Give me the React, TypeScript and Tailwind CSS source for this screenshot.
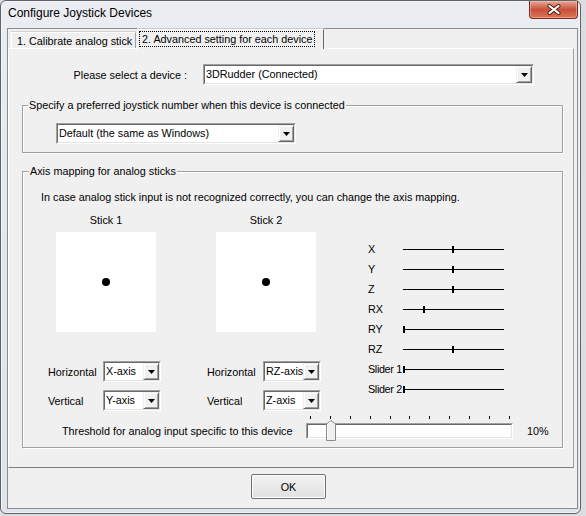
import React from "react";

function Arrow() {
  return (
    <svg width="7" height="4" viewBox="0 0 7 4" className="block">
      <path d="M0 0H7L3.5 4Z" fill="#000" />
    </svg>
  );
}

function Combo({ text, className }: { text: string; className: string }) {
  return (
    <div
      className={
        "flex h-[21px] border border-t-[#a0a0a0] border-l-[#a0a0a0] border-r-white border-b-white " +
        className
      }
    >
      <div className="flex min-w-0 flex-1 border border-t-[#696969] border-l-[#696969] border-r-[#e3e3e3] border-b-[#e3e3e3] bg-white">
        <span className="flex-1 overflow-hidden whitespace-nowrap pl-[1px] text-[10.8px] leading-[17px] text-black">
          {text}
        </span>
        <div className="flex w-[16px] items-center justify-center border border-t-[#f0f0f0] border-l-[#f0f0f0] border-r-[#696969] border-b-[#696969] bg-[#f0f0f0] shadow-[inset_1px_1px_0_#ffffff,inset_-1px_-1px_0_#a0a0a0]">
          <Arrow />
        </div>
      </div>
    </div>
  );
}

const axes: { label: string; pos: number; tight?: boolean }[] = [
  { label: "X", pos: 49 },
  { label: "Y", pos: 49 },
  { label: "Z", pos: 49 },
  { label: "RX", pos: 20 },
  { label: "RY", pos: 0 },
  { label: "RZ", pos: 49 },
  { label: "Slider 1", pos: 0, tight: true },
  { label: "Slider 2", pos: 0, tight: true },
];

function StickBox({ label }: { label: string }) {
  return (
    <div className="flex w-[100px] flex-col items-center">
      <span className="text-[10.8px] leading-[14px]">{label}</span>
      <div className="mt-[5px] flex h-[100px] w-[100px] items-center justify-center bg-white">
        <div className="h-[8px] w-[8px] rounded-full bg-black" />
      </div>
    </div>
  );
}

function Thumb() {
  return (
    <svg width="10" height="21" viewBox="0 0 10 21" className="block">
      <path d="M0.5 20.5V4L5 0.5L9.5 4V20.5Z" fill="#f0f0f0" stroke="#8a8a8a" />
      <path d="M1.5 19.5V4.5L5 1.8" fill="none" stroke="#ffffff" />
    </svg>
  );
}

export default function App() {
  const ticks = Array.from({ length: 11 });
  return (
    <div className="h-[516px] w-[586px] overflow-hidden bg-[#dcdddf] font-['Liberation_Sans',Arial,sans-serif] text-black">
      <div className="flex h-[514px] w-[581px] flex-col rounded-[6px] border border-[#5f6368] bg-linear-to-b from-[#eaedf1] via-[#e2e7ed] to-[#dfe4ea] shadow-[inset_0_0_0_1px_rgba(255,255,255,0.55)]">
        {/* title bar */}
        <div className="flex h-[27px] items-start">
          <span className="pl-[7px] pt-[5px] text-[12px] leading-[14px] text-black">
            Configure Joystick Devices
          </span>
          <div className="ml-auto mr-[2px] flex h-[18px] w-[49px] items-center justify-center rounded-b-[4px] border border-t-0 border-[#7b2a1f] bg-linear-to-b from-[#e7a898] via-[#c8503c] to-[#dd7355] shadow-[inset_0_0_0_1px_rgba(255,210,200,0.45)]">
            <svg width="14" height="11" viewBox="0 0 14 11">
              <path d="M2.5 2L11.5 9M11.5 2L2.5 9" stroke="#4a1a14" strokeWidth="4" strokeLinecap="round" />
              <path d="M2.5 2L11.5 9M11.5 2L2.5 9" stroke="#ffffff" strokeWidth="2.2" strokeLinecap="round" />
            </svg>
          </div>
        </div>

        {/* body row */}
        <div className="flex">
          <div className="w-[6px]" />
          {/* client */}
          <div className="flex h-[481px] w-[571px] flex-col border border-[#8b8c8d] bg-[#f0f0f0]">
            {/* tab strip */}
            <div className="flex h-[19px] items-end pl-[3px]">
              <div className="flex h-[16px] w-[125px] items-center border-t border-l border-r border-t-white border-l-white border-r-[#a0a0a0] pl-[5px] text-[10.8px] leading-[14px] shadow-[0_-1px_0_#d4d4d4]">
                1. Calibrate analog stick
              </div>
              <div className="relative z-10 ml-px -mb-px flex h-[20px] w-[187px] items-start border-t border-l border-r border-t-white border-l-white border-r-[#696969] bg-[#f0f0f0] pt-[1px] pl-[1px] shadow-[0_-1px_0_#c8c8c8]">
                <span className="border border-dotted border-black px-[2px] text-[10.8px] leading-[14px]">
                  2. Advanced setting for each device
                </span>
              </div>
            </div>

            {/* tab panel */}
            <div className="flex h-[420px] w-[566px] flex-col border border-t-white border-l-white border-r-[#a0a0a0] border-b-[#808080]">
              {/* device select */}
              <div className="mt-[15px] flex items-center">
                <span className="w-[178px] text-right text-[10.8px] leading-[14px]">
                  Please select a device :
                </span>
                <Combo text="3DRudder (Connected)" className="ml-[16px] w-[331px]" />
              </div>

              {/* group 1 */}
              <fieldset className="ml-[13px] mt-[13px] w-[541px] border border-[#a0a0a0] pb-[8px] pt-[11px] shadow-[inset_1px_1px_0_#ffffff,1px_1px_0_#ffffff]">
                <legend className="ml-[5px] bg-[#f0f0f0] px-px text-[10.8px] leading-[14px]">
                  Specify a preferred joystick number when this device is connected
                </legend>
                <div className="pl-[33px]">
                  <Combo text="Default (the same as Windows)" className="w-[240px]" />
                </div>
              </fieldset>

              {/* group 2 */}
              <fieldset className="ml-[13px] mt-[11px] w-[541px] border border-[#a0a0a0] pb-[8px] shadow-[inset_1px_1px_0_#ffffff,1px_1px_0_#ffffff]">
                <legend className="ml-[6px] bg-[#f0f0f0] px-px text-[10.8px] leading-[14px]">
                  Axis mapping for analog sticks
                </legend>
                <p className="ml-[18px] mt-[12px] text-[10.8px] leading-[14px]">
                  In case analog stick input is not recognized correctly, you can change the axis mapping.
                </p>

                <div className="flex items-start">
                  {/* left block */}
                  <div className="flex w-[345px] flex-col">
                    <div className="ml-[33px] mt-[9px] flex gap-[60px]">
                      <StickBox label="Stick 1" />
                      <StickBox label="Stick 2" />
                    </div>
                    <div className="ml-[25px] mt-[29px] flex items-center">
                      <span className="w-[55px] text-[10.8px] leading-[14px]">Horizontal</span>
                      <Combo text="X-axis" className="w-[58px]" />
                      <span className="ml-[46px] w-[56px] text-[10.8px] leading-[14px]">Horizontal</span>
                      <Combo text="RZ-axis" className="w-[58px]" />
                    </div>
                    <div className="ml-[25px] mt-[8px] flex items-center">
                      <span className="w-[55px] text-[10.8px] leading-[14px]">Vertical</span>
                      <Combo text="Y-axis" className="w-[58px]" />
                      <span className="ml-[46px] w-[56px] text-[10.8px] leading-[14px]">Vertical</span>
                      <Combo text="Z-axis" className="w-[58px]" />
                    </div>
                  </div>

                  {/* axis list */}
                  <div className="mt-[35px] flex flex-col">
                    {axes.map((a) => (
                      <div key={a.label} className="flex h-[20px] items-start">
                        <span
                          className={
                            a.tight
                              ? "w-[35px] whitespace-nowrap text-[10.8px] leading-[20px] tracking-[-0.35px]"
                              : "w-[35px] whitespace-nowrap text-[10.8px] leading-[20px]"
                          }
                        >
                          {a.label}
                        </span>
                        <div className="relative mt-[7px] h-[7px] w-[101px]">
                          <div className="absolute left-0 right-0 top-[3px] h-px bg-black" />
                          <div
                            className="absolute top-0 h-[7px] w-[2px] bg-black"
                            style={{ left: a.pos }}
                          />
                        </div>
                      </div>
                    ))}
                  </div>
                </div>

                {/* threshold */}
                <div className="mt-[5px] flex items-end">
                  <span className="ml-[39px] w-[244px] text-[10.8px] leading-[16px]">
                    Threshold for analog input specific to this device
                  </span>
                  <div className="flex w-[207px] flex-col">
                    <div className="ml-[4px] flex h-[3px] w-[200px] justify-between">
                      {ticks.map((_, i) => (
                        <div key={i} className="h-[3px] w-px bg-black" />
                      ))}
                    </div>
                    <div className="relative mt-[4px] h-[16px] border border-t-[#a0a0a0] border-l-[#a0a0a0] border-r-white border-b-white">
                      <div className="h-full w-full border border-t-[#696969] border-l-[#696969] border-r-[#e3e3e3] border-b-[#e3e3e3] bg-white" />
                      <div className="absolute left-[19px] top-[-4px]">
                        <Thumb />
                      </div>
                    </div>
                  </div>
                  <span className="ml-[14px] text-[10.8px] leading-[16px]">10%</span>
                </div>
              </fieldset>
            </div>

            {/* bottom buttons */}
            <div className="flex">
              <button className="ml-[243px] mt-[6px] flex h-[25px] w-[75px] items-center justify-center rounded-[2px] border border-[#707070] bg-linear-to-b from-[#f2f2f2] to-[#e0e0e0] text-[10.8px] leading-[14px] text-black shadow-[inset_0_0_0_1px_#fcfcfc]">
                OK
              </button>
            </div>
          </div>
          <div className="w-[2px]" />
        </div>
      </div>
    </div>
  );
}
